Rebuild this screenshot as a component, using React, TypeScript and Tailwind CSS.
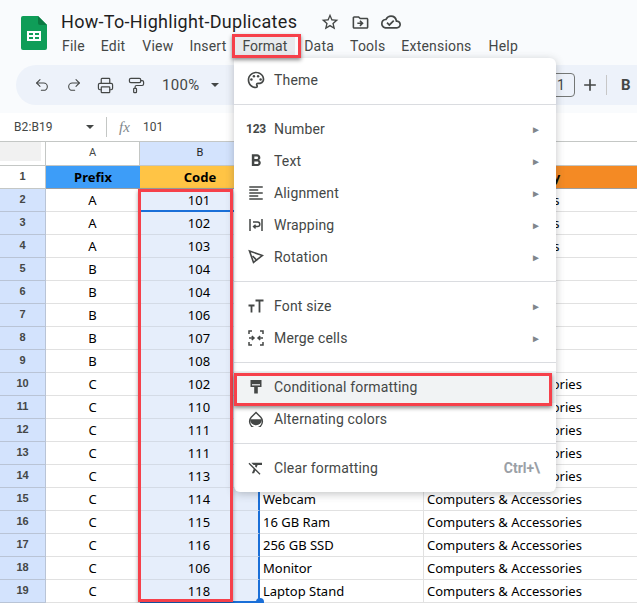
import React from "react";
import { MdOutlinePalette, MdFormatBold, MdFormatAlignLeft, MdFormatClear, MdOutlineStarBorder, MdOutlineCloudDone, MdAdd, MdOutlineDriveFileMove } from "react-icons/md";
import { Undo2, Redo2, Printer, PaintRoller } from "lucide-react";

const ui = "font-['Roboto',sans-serif]";
const cell = "font-['Noto_Sans',sans-serif]";

function Wrap() {
  return <svg width="16" height="16" viewBox="0 0 16 16" fill="none" stroke="#444746" strokeWidth="1.5"><path d="M2 2v12M14 2v12" /><path d="M5 5h4.500a2 2 0 0 1 0 4.600H6" /><path d="M7.600 7.800 5.600 9.600l2 1.800" /></svg>;
}
function Rotate() {
  return <svg width="16" height="16" viewBox="0 0 16 16" fill="none" stroke="#444746" strokeWidth="1.6"><path d="M1.500 2 14.500 6.500 5.500 13.500z" /><path d="M4.500 7 9 11.500" /></svg>;
}
function FontSize() {
  return <svg width="16" height="16" viewBox="0 0 16 16" fill="none" stroke="#444746" strokeWidth="1.8"><path d="M7.500 2.500h8M11.500 2.500v12" /><path d="M.5 7.500h6M3.500 7.500v7" /></svg>;
}
function Merge() {
  return <svg width="16" height="16" viewBox="0 0 16 16" fill="none" stroke="#444746" strokeWidth="1.5"><path d="M1 4V1h3M12 1h3v3M1 12v3h3M12 15h3v-3" /><path d="M1 8h4.500M3.800 6 6 8l-2.200 2M15 8h-4.500M12.200 6 10 8l2.200 2" /></svg>;
}
function Roller() {
  return <svg width="16" height="16" viewBox="0 0 16 16" fill="#444746"><path d="M2.500 1h11v7h-11z" /><path d="M6.200 8h3.600v6.500H6.200z" /><path d="M4 5.200h8v1.200H4z" fill="#f1f3f4" /></svg>;
}
function Drop() {
  return <svg width="16" height="16" viewBox="0 0 16 16"><path d="M8 1.500 3.200 6.300a6.400 6.400 0 1 0 9.600 0z" fill="#fff" stroke="#444746" strokeWidth="1.400" /><path d="M2 8.200h12a6 6 0 0 1-12 0z" fill="#444746" /></svg>;
}
function SheetsLogo() {
  return <svg width="26" height="34" viewBox="0 0 26 34"><path d="M2 0h15l9 9v23a2 2 0 0 1-2 2H2a2 2 0 0 1-2-2V2a2 2 0 0 1 2-2z" fill="#0f9d58" /><path d="M17 0l9 9h-7a2 2 0 0 1-2-2z" fill="#0a7a42" /><path d="M6 15h14v10H6zM8 17v2h4v-2zm6 0v2h4v-2zM8 21v2h4v-2zm6 0v2h4v-2z" fill="#fff" fillRule="evenodd" /></svg>;
}
function Fx() {
  return <span className="font-['Liberation_Serif',serif] italic text-[15px] text-[#80868b] inline-block w-[14px]">fx</span>;
}

type Item = { label: string; icon: React.ReactNode; arrow?: boolean; hint?: string; active?: boolean };

const g1: Item[] = [{ label: "Theme", icon: <MdOutlinePalette size={20} color="#444746" /> }];
const g2: Item[] = [
  { label: "Number", arrow: true, icon: <span className={`${ui} font-bold text-[12px] text-[#444746] tracking-[-0.3px]`}>123</span> },
  { label: "Text", arrow: true, icon: <MdFormatBold size={20} color="#444746" /> },
  { label: "Alignment", arrow: true, icon: <MdFormatAlignLeft size={18} color="#444746" /> },
  { label: "Wrapping", arrow: true, icon: <Wrap /> },
  { label: "Rotation", arrow: true, icon: <Rotate /> },
];
const g3: Item[] = [
  { label: "Font size", arrow: true, icon: <FontSize /> },
  { label: "Merge cells", arrow: true, icon: <Merge /> },
];
const g4: Item[] = [
  { label: "Conditional formatting", icon: <Roller />, active: true },
  { label: "Alternating colors", icon: <Drop /> },
];
const g5: Item[] = [{ label: "Clear formatting", hint: "Ctrl+\\", icon: <MdFormatClear size={18} color="#444746" /> }];

function Row({ it }: { it: Item }) {
  return (
    <div className={`h-8 flex items-center pl-[12px] pr-[16px] ${it.active ? "bg-[#f1f3f4]" : ""}`}>
      <span className="w-5 flex justify-center items-center shrink-0">{it.icon}</span>
      <span className="ml-[8px] text-[14px] tracking-[0.16px] text-[#444746] flex-1">{it.label}</span>
      {it.arrow && <span className="text-[10px] text-[#80868b] mr-[-1px] mt-[1px]">►</span>}
      {it.hint && <span className="text-[14px] font-bold text-[#9aa0a6]">{it.hint}</span>}
    </div>
  );
}
const Sep = () => <div className="h-px bg-[#dadce0] my-2" />;

const rows: [string, string, string, string][] = [
  ["A", "101", "Mobile Case", "Phones & Accessories"],
  ["A", "102", "Charger", "Phones & Accessories"],
  ["A", "103", "Headset", "Phones & Accessories"],
  ["B", "104", "Toaster", "Appliances"],
  ["B", "104", "Toaster", "Appliances"],
  ["B", "106", "Blender", "Appliances"],
  ["B", "107", "Kettle", "Appliances"],
  ["B", "108", "Fan", "Appliances"],
  ["C", "102", "Mouse", "Computers & Accessories"],
  ["C", "110", "Keyboard", "Computers & Accessories"],
  ["C", "111", "Router", "Computers & Accessories"],
  ["C", "111", "Router", "Computers & Accessories"],
  ["C", "113", "Hub", "Computers & Accessories"],
  ["C", "114", "Webcam", "Computers & Accessories"],
  ["C", "115", "16 GB Ram", "Computers & Accessories"],
  ["C", "116", "256 GB SSD", "Computers & Accessories"],
  ["C", "106", "Monitor", "Computers & Accessories"],
  ["C", "118", "Laptop Stand", "Computers & Accessories"],
];

const line = "border-b border-[#e1e1e1]";

export default function App() {
  return (
    <div className={`relative w-[637px] h-[603px] overflow-hidden bg-white ${ui}`}>
      <div className="bg-[#f9fbfd]">
        <div className="h-[65px] flex pl-[21px] pt-[16px]">
          <SheetsLogo />
          <div className="ml-[14px] -mt-[6px]">
            <div className="text-[18px] leading-[24px] text-[#1f1f1f] tracking-[0.3px] flex items-center">
              How-To-Highlight-Duplicates
              <span className="ml-[23px] flex items-center gap-[11px] text-[#444746]">
                <MdOutlineStarBorder size={20} />
                <MdOutlineDriveFileMove size={19} />
                <MdOutlineCloudDone size={20} />
              </span>
            </div>
            <div className="flex text-[14px] leading-[24px] text-[#444746] tracking-[0.2px]">
              <span className="ml-[1px]">File</span>
              <span className="ml-[16px]">Edit</span>
              <span className="ml-[17px]">View</span>
              <span className="ml-[16px]">Insert</span>
              <span className="ml-[8px] bg-[#e8eaed] px-[8px] tracking-[0px]">Format</span>
              <span className="ml-[9px]">Data</span>
              <span className="ml-[16px]">Tools</span>
              <span className="ml-[16px]">Extensions</span>
              <span className="ml-[17px]">Help</span>
            </div>
          </div>
        </div>
        <div className="ml-[16px] h-[40px] rounded-l-[20px] bg-[#edf2fa] flex items-center pl-[18px] text-[#444746] relative">
          <Undo2 size={16} strokeWidth={1.6} />
          <Redo2 size={16} strokeWidth={1.6} className="ml-[16px]" />
          <Printer size={17} strokeWidth={1.7} className="ml-[15px]" />
          <PaintRoller size={17} strokeWidth={1.7} className="ml-[14px]" />
          <span className="ml-[17px] text-[15px] tracking-[0.3px]">100%</span>
          <span className="ml-[12px] w-0 h-0 border-x-[4px] border-x-transparent border-t-[4px] border-t-[#444746]" />
          <div className="ml-auto flex items-center">
            <span className="h-[24px] w-[36px] border border-[#747775] rounded-[4px] text-[14px] flex items-center justify-center">11</span>
            <MdAdd size={20} className="ml-[5px]" />
            <span className="ml-[6px] w-px h-5 bg-[#c7c7c7]" />
            <span className="ml-[14px] mr-[5px] font-bold text-[15px] w-[11px]">B</span>
          </div>
        </div>
        <div className="h-[8px]" />
      </div>
      <div className="h-[29px] bg-white flex items-center border-b border-[#c4c7c5] text-[12px] text-[#444746]">
        <span className="ml-[14px] w-[72px] tracking-[0.1px]">B2:B19</span>
        <span className="w-0 h-0 border-x-[4px] border-x-transparent border-t-[4px] border-t-[#444746]" />
        <span className="ml-[12px] w-px h-[20px] bg-[#c4c7c5]" />
        <span className="ml-[12px]"><Fx /></span>
        <span className="ml-[10px]">101</span>
      </div>

      <div className="grid grid-cols-[46px_94px_120px_164px_1fr] grid-rows-[24px_repeat(19,23px)] text-[13px] text-black">
        <div className="bg-white border-r-[1px] border-b border-[#c4c7c5] pr-[4px] pb-[4px]"><div className="h-full bg-[#f1f1f1]" /></div>
        <div className="border-r border-b border-[#c4c7c5] text-[11px] text-[#444746] flex items-center justify-center">A</div>
        <div className="bg-[#d3e3fd] border-b border-[#c4c7c5] text-[11px] text-[#1f1f1f] flex items-center justify-center">B</div>
        <div className="border-r border-b border-[#c4c7c5] text-[11px] text-[#444746] flex items-center justify-center">C</div>
        <div className="border-b border-[#c4c7c5] text-[11px] text-[#444746] flex items-center justify-center">D</div>

        <div className="border-r border-b border-[#c4c7c5] text-[11px] font-bold text-[#444746] flex items-center justify-center pb-[1px] font-['Liberation_Sans',sans-serif]">1</div>
        <div className={`${cell} font-bold bg-[#3d9df8] border-b border-[#9e9e9e] flex items-center justify-center pt-[2px]`}>Prefix</div>
        <div className={`${cell} font-bold bg-[#ffc445] border-b border-[#9e9e9e] flex items-center justify-center pt-[2px]`}>Code</div>
        <div className={`${cell} font-bold bg-[#ffc445] border-b border-[#9e9e9e] flex items-center justify-center pt-[2px]`}>Product</div>
        <div className={`${cell} font-bold bg-[#f48a24] border-b border-[#9e9e9e] flex items-center justify-center pt-[2px]`}>Category</div>

        {rows.map((r, i) => (
          <React.Fragment key={i}>
            <div className="bg-[#d3e3fd] border-r border-b border-[#b9c4d6] text-[11px] font-bold text-[#444746] flex items-center justify-center pb-[1px] font-['Liberation_Sans',sans-serif]">{i + 2}</div>
            <div className={`${cell} ${line} border-r flex items-center justify-center pt-[2px]`}>{r[0]}</div>
            <div className={`${cell} bg-[#e6eefb] flex items-center justify-center pt-[2px] border-r-2 border-r-[#1a6fd8] ${i === 0 || i === 17 ? "border-b-2 border-b-[#1a6fd8]" : "border-b border-b-[#d4dbe6]"}`}>{r[1]}</div>
            <div className={`${cell} ${line} border-r flex items-center pl-[3px] pt-[2px] whitespace-nowrap overflow-hidden`}>{r[2]}</div>
            <div className={`${cell} ${line} flex items-center pl-[3px] pt-[2px] whitespace-nowrap overflow-hidden`}>{r[3]}</div>
          </React.Fragment>
        ))}
      </div>

      <div className="absolute left-[256px] top-[598px] w-2 h-2 rounded-full bg-[#1a6fd8]" />

      {/* Format menu */}
      <div className="absolute left-[234px] top-[58px] w-[322px] h-[434px] bg-white rounded-b-[6px] rounded-tr-[6px] shadow-[0_2px_8px_rgba(60,64,67,0.3)] pt-[6px]">
        {g1.map((it) => <Row key={it.label} it={it} />)}
        <Sep />
        {g2.map((it) => <Row key={it.label} it={it} />)}
        <Sep />
        {g3.map((it) => <Row key={it.label} it={it} />)}
        <Sep />
        {g4.map((it) => <Row key={it.label} it={it} />)}
        <Sep />
        {g5.map((it) => <Row key={it.label} it={it} />)}
      </div>

      {/* Annotation boxes */}
      <div className="absolute left-[232px] top-[34px] w-[69px] h-[24px] border-[3px] border-[#f6404a] shadow-[0_2px_4px_rgba(0,0,0,0.45)]" />
      <div className="absolute left-[138px] top-[189px] w-[95px] h-[413px] border-[3px] border-[#f6404a] shadow-[0_2px_4px_rgba(0,0,0,0.35)]" />
      <div className="absolute left-[234px] top-[373px] w-[318px] h-[33px] border-[3px] border-[#f6404a] shadow-[0_2px_4px_rgba(0,0,0,0.45)]" />
    </div>
  );
}
